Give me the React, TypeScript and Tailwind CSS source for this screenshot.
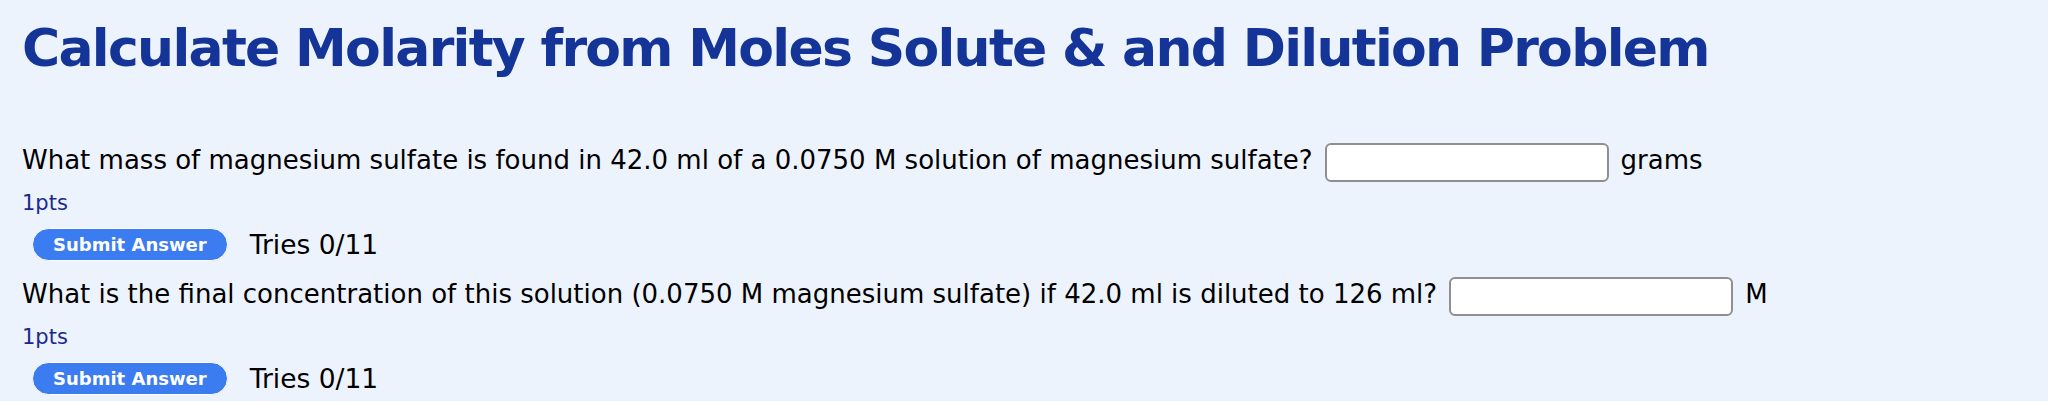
import React from "react";

type Question = {
  text: string;
  unit: string;
  tries: string;
};

const questions: Question[] = [
  {
    text: "What mass of magnesium sulfate is found in 42.0 ml of a 0.0750 M solution of magnesium sulfate?",
    unit: "grams",
    tries: "Tries 0/11",
  },
  {
    text: "What is the final concentration of this solution (0.0750 M magnesium sulfate) if 42.0 ml is diluted to 126 ml?",
    unit: "M",
    tries: "Tries 0/11",
  },
];

function QuestionBlock({ q }: { q: Question }) {
  return (
    <div className="flex flex-col">
      <div className="flex items-start">
        <span className="mt-[2px] text-[26px] leading-[30px] text-black whitespace-nowrap">{q.text}</span>
        <input
          type="text"
          className="ml-[12px] h-[39px] w-[284px] rounded-[6px] border-2 border-[#8f8f8f] bg-white outline-none"
        />
        <span className="ml-[12px] mt-[2px] text-[26px] leading-[30px] text-black">{q.unit}</span>
      </div>
      <div className="mt-[9px] text-[21px] leading-[24px] text-[#1a2a8a]">1pts</div>
      <div className="mt-[13px] flex items-center">
        <button className="ml-[10px] h-[33px] rounded-full border border-white bg-[#3b7cf0] px-[20px] text-[18px] font-bold leading-[20px] text-white">
          Submit Answer
        </button>
        <span className="ml-[22px] text-[26.5px] leading-[30px] text-black">{q.tries}</span>
      </div>
    </div>
  );
}

export default function App() {
  return (
    <div
      className="min-h-[401px] bg-[#edf3fd] pl-[22px] pt-[18px]"
      style={{ fontFamily: '"DejaVu Sans", Verdana, sans-serif' }}
    >
      <h1 className="text-[52px] font-bold leading-[61px] tracking-[-1.7px] text-[#143597]">
        Calculate Molarity from Moles Solute &amp; and Dilution Problem
      </h1>
      <div className="mt-[64px] flex flex-col gap-[16px]">
        {questions.map((q, i) => (
          <QuestionBlock key={i} q={q} />
        ))}
      </div>
    </div>
  );
}
